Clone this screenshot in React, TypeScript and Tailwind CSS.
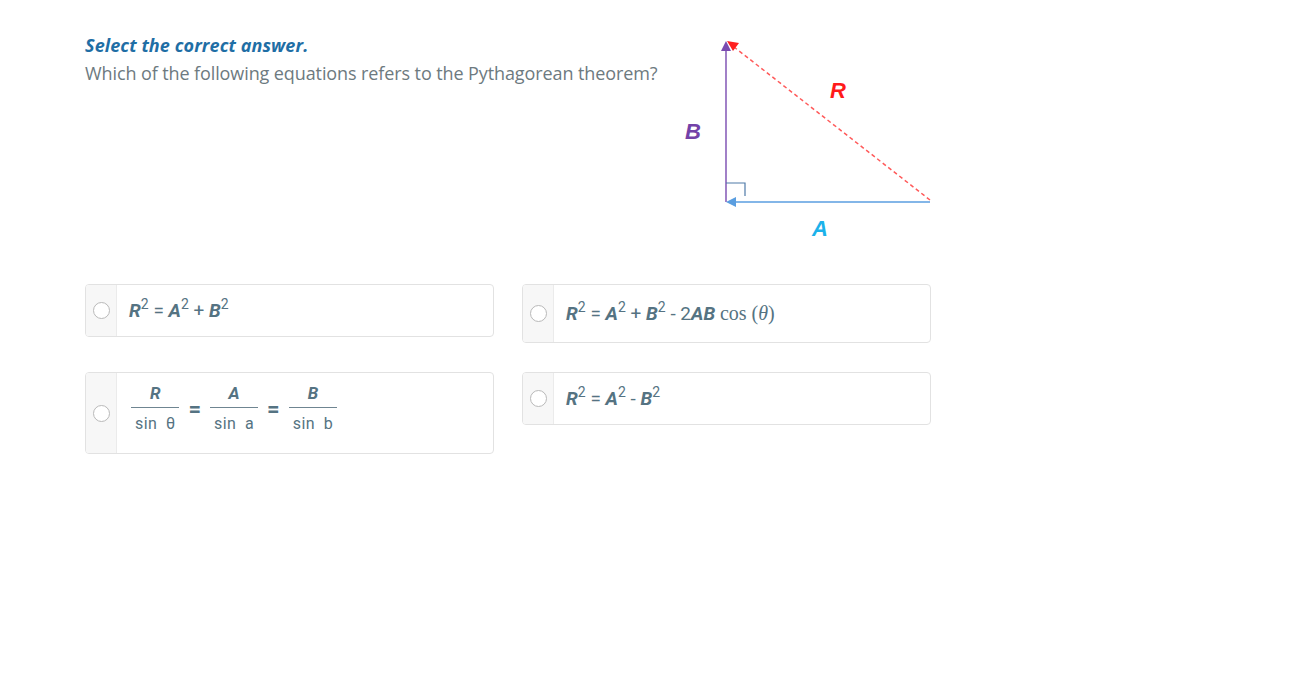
import React from "react";

const mathColor = "text-[#557382]";

function Sup({ children }: { children: React.ReactNode }) {
  return <sup className="relative top-[-1px] text-[14px] font-normal not-italic align-super leading-none">{children}</sup>;
}

function V({ children }: { children: React.ReactNode }) {
  return <span className="font-bold italic">{children}</span>;
}

function Frac({ num, den }: { num: string; den: string }) {
  return (
    <span className="inline-flex flex-col items-center mx-[2px]">
      <span className="px-[4px] pb-[4px] text-[17px] font-bold italic leading-[20px]">{num}</span>
      <span className="h-px w-full bg-[#6f8591]" />
      <span className="px-[4px] pt-[6px] text-[16px] leading-[20px] tracking-[0.4px] whitespace-pre">{den}</span>
    </span>
  );
}

function Card({ children, py }: { children: React.ReactNode; py: string }) {
  return (
    <div className="flex rounded-[4px] border border-[#e2e2e2] bg-white overflow-hidden">
      <div className="flex w-[31px] shrink-0 items-center justify-center bg-[#f7f7f7] border-r border-[#ebebeb]">
        <span className="h-[17px] w-[17px] rounded-full border border-[#b9b9b9] bg-white" />
      </div>
      <div className={`flex items-center pl-[12px] ${py} ${mathColor}`} style={{ fontFamily: "Roboto, 'Liberation Sans', sans-serif" }}>
        {children}
      </div>
    </div>
  );
}

export default function App() {
  return (
    <div className="min-h-[690px] w-[1298px] bg-white pl-[85px] pt-[31px]" style={{ fontFamily: "'Open Sans', 'Noto Sans', sans-serif" }}>
      <div className="flex">
        <div className="w-[595px]">
          <p className="text-[18px] leading-[28px] font-bold italic text-[#1f6ea5] tracking-[0.1px]">Select the correct answer.</p>
          <p className="text-[18px] leading-[28px] text-[#6d7a80] tracking-[-0.1px]">Which of the following equations refers to the Pythagorean theorem?</p>
        </div>
        <svg className="mt-[5px]" width="260" height="210" viewBox="0 0 260 210">
          <line x1="46" y1="12" x2="46" y2="166" stroke="#7a4bb0" strokeWidth="1.4" />
          <polygon points="46,5 41,15 51,15" fill="#7a4bb0" />
          <line x1="54" y1="166" x2="250" y2="166" stroke="#5a9ee0" strokeWidth="1.4" />
          <polygon points="46,166 56,161 56,171" fill="#5a9ee0" />
          <line x1="250" y1="164" x2="54" y2="11" stroke="#ff5a5a" strokeWidth="1.5" strokeDasharray="4 3" />
          <polygon points="47,5 59,7 53,15" fill="#ff2020" />
          <polyline points="46,147 65,147 65,160" fill="none" stroke="#4f7aa8" strokeWidth="1.2" />
          <text x="13" y="103" textAnchor="middle" fontFamily="'Liberation Sans', sans-serif" fontWeight="bold" fontStyle="italic" fontSize="22" fill="#7342a8">B</text>
          <text x="158" y="62" textAnchor="middle" fontFamily="'Liberation Sans', sans-serif" fontWeight="bold" fontStyle="italic" fontSize="22" fill="#ff1a1a">R</text>
          <text x="140" y="200" textAnchor="middle" fontFamily="'Liberation Sans', sans-serif" fontWeight="bold" fontStyle="italic" fontSize="22" fill="#1cb2ea">A</text>
        </svg>
      </div>
      <div className="mt-[38px] grid grid-cols-[409px_409px] gap-x-[28px] gap-y-[29px] items-start">
        <Card py="py-[13px]">
          <span className="text-[19px] leading-[24px]">
            <V>R</V><Sup>2</Sup> = <V>A</V><Sup>2</Sup> + <V>B</V><Sup>2</Sup>
          </span>
        </Card>
        <Card py="py-[13px]">
          <span className="text-[19px] leading-[30px]">
            <V>R</V><Sup>2</Sup> = <V>A</V><Sup>2</Sup> + <V>B</V><Sup>2</Sup> - 2<V>AB</V>{" "}
            <span className="text-[20px]" style={{ fontFamily: "'Liberation Serif', serif" }}>cos (<i>θ</i>)</span>
          </span>
        </Card>
        <Card py="pt-[10px] pb-[19px]">
          <span className="inline-flex items-center">
            <Frac num="R" den="sin  θ" />
            <span className="mx-[7px] font-bold text-[22px]">=</span>
            <Frac num="A" den="sin  a" />
            <span className="mx-[7px] font-bold text-[22px]">=</span>
            <Frac num="B" den="sin  b" />
          </span>
        </Card>
        <Card py="py-[13px]">
          <span className="text-[19px] leading-[24px]">
            <V>R</V><Sup>2</Sup> = <V>A</V><Sup>2</Sup> - <V>B</V><Sup>2</Sup>
          </span>
        </Card>
      </div>
    </div>
  );
}
